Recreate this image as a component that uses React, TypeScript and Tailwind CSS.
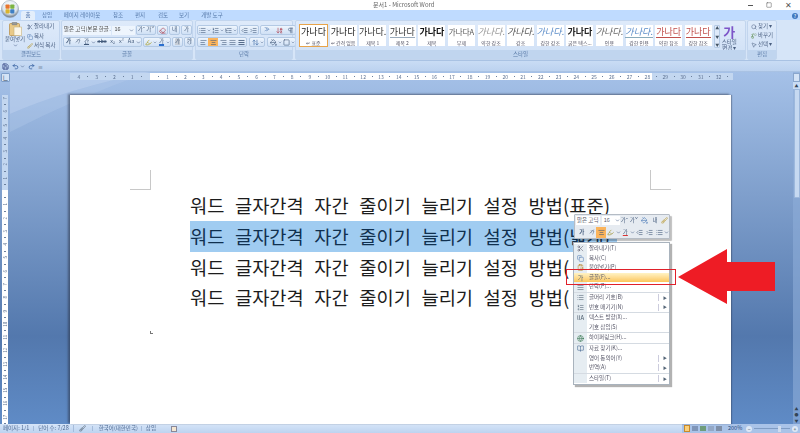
import type React from "react"
import {
  AlignCenter,
  AlignJustify,
  AlignLeft,
  AlignRight,
  ArrowDownAZ,
  ArrowUpDown,
  BookOpen,
  Brush,
  ChevronDown,
  ClipboardPaste,
  Copy,
  Eraser,
  Globe,
  Highlighter,
  IndentDecrease,
  IndentIncrease,
  List,
  ListOrdered,
  ListTree,
  MousePointer2,
  PaintBucket,
  Pilcrow,
  Redo2,
  Replace,
  Save,
  Scissors,
  Search,
  Square,
  Undo2,
} from "lucide-react"

const lines = ["방법(표준)", "방법(넓게)", "방법(", "방법("]

const styleTiles = [
  { text: "가나다", label: "↵ 표준", cls: "text-[#222]", active: true },
  { text: "가나다", label: "↵ 간격 없음", cls: "text-[#222]" },
  { text: "가나다.", label: "제목 1", cls: "text-[#333]" },
  { text: "가나다", label: "제목 2", cls: "text-[#333] border-b border-[#9ab]" },
  { text: "가나다", label: "제목", cls: "font-bold text-[#111]" },
  { text: "가나다A", label: "부제", cls: "text-[#555] !text-[7.5px]" },
  { text: "가나다.", label: "약한 강조", cls: "italic text-[#999]" },
  { text: "가나다.", label: "강조", cls: "italic text-[#555]" },
  { text: "가나다.", label: "강한 강조", cls: "italic text-[#5b8cc8]" },
  { text: "가나다", label: "굵은 텍스...", cls: "font-bold text-[#222]" },
  { text: "가나다.", label: "인용", cls: "italic text-[#666]" },
  { text: "가나다.", label: "강한 인용", cls: "italic text-[#5b8cc8] border-b border-[#8ab]" },
  { text: "가나다", label: "약한 참조", cls: "text-[#c0504d] border-b border-[#c0504d]" },
  { text: "가나다", label: "강한 참조", cls: "text-[#c0504d] border-b border-[#c0504d]" },
]

const tabs = [
  { name: "홈", w: "w-[14px]", active: true },
  { name: "삽입", w: "w-[24px]" },
  { name: "페이지 레이아웃", w: "w-[46px]" },
  { name: "참조", w: "w-[26px]" },
  { name: "편지", w: "w-[18px]" },
  { name: "검토", w: "w-[28px]" },
  { name: "보기", w: "w-[14px]" },
  { name: "개발 도구", w: "w-[42px]" },
]

const menuItems: { icon?: React.ReactNode; label: string; sub?: boolean; hot?: boolean; sep?: boolean }[] = [
  { icon: <Scissors size={7} className="text-[#667]" />, label: "잘라내기(T)" },
  { icon: <Copy size={7} className="text-[#5b83b8]" />, label: "복사(C)" },
  { icon: <ClipboardPaste size={7} className="text-[#b8862c]" />, label: "붙여넣기(P)" },
  { icon: <span className="text-[6px] text-[#567]">가</span>, label: "글꼴(F)...", hot: true },
  { icon: <AlignJustify size={7} className="text-[#567]" />, label: "단락(P)...", sep: true },
  { icon: <List size={7} className="text-[#567]" />, label: "글머리 기호(B)", sub: true },
  { icon: <ListOrdered size={7} className="text-[#567]" />, label: "번호 매기기(N)", sub: true, sep: true },
  { icon: <span className="text-[6px] text-[#456]">llA</span>, label: "텍스트 방향(X)..." },
  { label: "기호 삽입(S)", sep: true },
  { icon: <Globe size={7} className="text-[#3d7a57]" />, label: "하이퍼링크(H)...", sep: true },
  { icon: <BookOpen size={7} className="text-[#4a6a95]" />, label: "자료 찾기(K)..." },
  { label: "영어 동의어(Y)", sub: true },
  { label: "번역(A)", sub: true, sep: true },
  { label: "스타일(T)", sub: true },
]

function Caret() {
  return <ChevronDown size={5} strokeWidth={3} className="text-[#5a7196]" />
}

function Cluster({ children, className = "" }: { children: React.ReactNode; className?: string }) {
  return (
    <div
      className={`flex h-[10px] items-center rounded-[2px] border border-[#b3c9e4] bg-gradient-to-b from-[#eef5fd] to-[#cfe0f5] ${className}`}
    >
      {children}
    </div>
  )
}

function Cell({ children, hot = false, w = "w-[10px]" }: { children: React.ReactNode; hot?: boolean; w?: string }) {
  return (
    <div className={`flex h-full items-center justify-center text-[#41597a] ${w} ${hot ? "bg-[#fbb45c]" : ""}`}>
      {children}
    </div>
  )
}

function Group({ label, className, children }: { label: string; className: string; children: React.ReactNode }) {
  return (
    <div className={`flex h-full flex-none flex-col rounded-[2px] border border-[#c2d5ee] bg-gradient-to-b from-[#deeafa] to-[#cfe0f6] ${className}`}>
      <div className="min-h-0 flex-1">{children}</div>
      <div className="flex h-[9px] flex-none items-center justify-center bg-[#c0d5ef] text-[5.5px] leading-none text-[#5a7ba8]">
        {label}
      </div>
    </div>
  )
}

function Orb() {
  return (
    <svg width="18" height="18" viewBox="0 0 18 18">
      <defs>
        <radialGradient id="orb" cx="50%" cy="35%" r="60%">
          <stop offset="0" stopColor="#ffffff" />
          <stop offset="0.7" stopColor="#dde6ee" />
          <stop offset="1" stopColor="#7d8a99" />
        </radialGradient>
      </defs>
      <circle cx="9" cy="9" r="8.6" fill="url(#orb)" stroke="#8a96a6" strokeWidth="0.5" />
      <rect x="4.5" y="4.5" width="4.2" height="4.2" rx="0.8" fill="#e8752d" />
      <rect x="9.2" y="4.5" width="4.2" height="4.2" rx="0.8" fill="#7cb342" />
      <rect x="4.5" y="9.2" width="4.2" height="4.2" rx="0.8" fill="#d9b430" />
      <rect x="9.2" y="9.2" width="4.2" height="4.2" rx="0.8" fill="#3f7fc4" />
    </svg>
  )
}

function PasteIcon() {
  return (
    <svg width="13" height="14" viewBox="0 0 13 14">
      <rect x="0.5" y="1.5" width="10" height="12" rx="1" fill="#e9c987" stroke="#b48a42" strokeWidth="0.7" />
      <rect x="3" y="0.3" width="5" height="2.6" rx="0.6" fill="#9a9a96" stroke="#6f6f6c" strokeWidth="0.4" />
      <path d="M5 5H12.5V13.5H5Z" fill="#fbf6e8" stroke="#c7b27e" strokeWidth="0.6" />
    </svg>
  )
}

function HRuler() {
  const cells = Array.from({ length: 37 }, (_, i) => Math.abs(i - 4))
  return (
    <div className="flex h-[7px] w-[663px] items-center overflow-hidden bg-[linear-gradient(90deg,#c3d7f0_80px,#ffffff_80px,#ffffff_582px,#c3d7f0_582px)] pl-[4.4px] text-[5px] leading-none text-[#5d7190] blur-[0.3px]">
      {cells.map((n, i) => (
        <div key={i} className="flex flex-none items-center">
          <span className="w-[9px] flex-none text-center">{n === 0 ? "" : n}</span>
          <span className="flex w-[8.77px] flex-none justify-center">
            <span className="h-[1px] w-[1px] bg-[#6b7f9b]" />
          </span>
        </div>
      ))}
    </div>
  )
}

function VRuler() {
  const cells = [7, 6, 5, 4, 3, 2, 1, 0, 1, 2, 3, 4, 5, 6, 7, 8, 9, 10, 11, 12, 13, 14, 15, 16, 17]
  return (
    <div className="ml-[2px] flex h-[329px] w-[6px] flex-col items-center overflow-hidden bg-[linear-gradient(180deg,#c3d7f0_95px,#ffffff_95px)] text-[4.5px] leading-none text-[#5d7190] blur-[0.3px]">
      {cells.map((n, i) => (
        <div key={i} className="flex flex-none flex-col items-center">
          <span className="flex h-[6.65px] w-[6px] -rotate-90 items-center justify-center">{n === 0 ? "" : n}</span>
          <span className="flex h-[6.65px] items-center">
            <span className="h-[1px] w-[2px] bg-[#6b7f9b]" />
          </span>
        </div>
      ))}
    </div>
  )
}

function ContextMenu() {
  return (
    <div className="absolute left-[573px] top-[242px] flex w-[97px] flex-col border border-[#a9b3bd] bg-white py-[1px] text-[5.5px] leading-none text-[#556] shadow-[2px_2px_1px_rgba(0,0,0,0.3)]">
      {menuItems.map((item) => (
        <div key={item.label} className={item.sep ? "border-b border-[#d5dbe2]" : ""}>
          <div className={`flex h-[9.6px] items-center ${item.hot ? "bg-gradient-to-b from-[#fff3c4] to-[#fcc659]" : ""}`}>
            <div className={`flex h-full w-[13px] flex-none items-center justify-center blur-[0.25px] ${item.hot ? "" : "bg-[#e6edf2]"}`}>
              {item.icon}
            </div>
            <span className="ml-[2px] flex-1 blur-[0.25px]">{item.label}</span>
            {item.sub && (
              <span className="mr-[2px] flex h-[7px] w-[9px] items-center justify-end border-l border-[#ccd] text-[4px] text-[#567]">▶</span>
            )}
          </div>
        </div>
      ))}
    </div>
  )
}

function MiniToolbar() {
  return (
    <div className="absolute left-[574px] top-[214px] flex h-[25px] w-[96px] flex-col justify-center gap-[1px] rounded-[1px] border border-[#b5bcc5] bg-[#e6ebf1] pl-[1px] text-[5.5px] leading-none text-[#556] shadow-[2px_2px_1px_rgba(0,0,0,0.25)]">
      <div className="flex h-[11px] items-center blur-[0.25px]">
        <div className="flex h-[9px] w-[24px] items-center justify-between overflow-hidden whitespace-nowrap bg-white pl-[1px]">
          맑은 고딕 <Caret />
        </div>
        <div className="ml-[2px] flex h-[9px] w-[18px] items-center justify-between bg-white pl-[2px]">
          16 <Caret />
        </div>
        <Cell w="w-[10px]"><span>가ˆ</span></Cell>
        <Cell w="w-[9px]"><span>가ˇ</span></Cell>
        <Cell w="w-[12px]"><PaintBucket size={7} className="text-[#4a7ab8]" /></Cell>
        <Cell><span>내</span></Cell>
        <Cell w="w-[9px]"><Brush size={7} className="text-[#b8962c]" /></Cell>
      </div>
      <div className="flex h-[11px] items-center pl-[1px] blur-[0.25px]">
        <Cell><span className="font-bold">가</span></Cell>
        <Cell><span className="italic">가</span></Cell>
        <Cell hot><AlignCenter size={7} /></Cell>
        <Cell><Highlighter size={7} className="text-[#9a8a20]" /></Cell>
        <Cell w="w-[5px]"><Caret /></Cell>
        <Cell><span className="underline decoration-[#d33]">가</span></Cell>
        <Cell w="w-[5px]"><Caret /></Cell>
        <Cell><IndentDecrease size={7} /></Cell>
        <Cell><IndentIncrease size={7} /></Cell>
        <Cell><List size={7} /></Cell>
        <Cell w="w-[5px]"><Caret /></Cell>
      </div>
    </div>
  )
}

export default function App() {
  return (
    <div className="relative flex h-[433px] w-[800px] flex-col overflow-hidden bg-white font-['Noto_Sans_CJK_KR','Noto_Sans',sans-serif]">
      {/* Title bar */}
      <div className="flex h-[10px] flex-none items-center bg-white pl-[373px] text-[6px] leading-none text-[#666]">
        <span className="blur-[0.25px]">문서1 - Microsoft Word</span>
        <div className="ml-auto flex items-center gap-[13px] pr-[8px] text-[#555]">
          <span className="h-[1px] w-[5px] bg-[#555]" />
          <Square size={6} strokeWidth={2} />
          <span className="text-[8px]">✕</span>
        </div>
      </div>

      {/* Tabs */}
      <div className="flex h-[10px] flex-none items-end bg-[#bfdbff] pl-[21px] text-[5.5px] leading-none text-[#5578a8]">
        {tabs.map((t) => (
          <div
            key={t.name}
            className={`flex h-[9px] flex-none items-center justify-center rounded-t-[2px] ${t.w} ${t.active ? "bg-[#e3eefb] text-[#15428b]" : ""}`}
          >
            <span className="blur-[0.25px]">{t.name}</span>
          </div>
        ))}
        <div className="ml-auto mb-[1.5px] mr-[2px] flex h-[6px] w-[6px] items-center justify-center rounded-full bg-[#3f78c0] text-[5px] text-white">
          ?
        </div>
      </div>

      {/* Ribbon */}
      <div className="flex h-[40px] flex-none gap-[1px] bg-[#d6e5f8] pl-[2px] text-[5.5px] leading-none text-[#4a5f80] blur-[0.3px]">
        <Group label="클립보드" className="w-[58px]">
          <div className="flex h-full">
            <div className="flex w-[24px] flex-none flex-col items-center pt-[1px]">
              <PasteIcon />
              <span className="mt-[1px] whitespace-nowrap">붙여넣기</span>
              <Caret />
            </div>
            <div className="flex flex-col gap-[3.5px] pt-[3px]">
              <span className="flex items-center gap-[1px] whitespace-nowrap"><Scissors size={6} />잘라내기</span>
              <span className="flex items-center gap-[1px] whitespace-nowrap"><Copy size={6} className="text-[#5b83b8]" />복사</span>
              <span className="flex items-center gap-[1px] whitespace-nowrap"><Brush size={6} className="text-[#b8962c]" />서식 복사</span>
            </div>
          </div>
        </Group>

        <Group label="글꼴" className="w-[132px]">
          <div className="flex flex-col gap-[2px] pl-[1px] pt-[4px]">
            <div className="flex h-[10px] items-center">
              <div className="flex h-[9px] w-[52px] items-center justify-between overflow-hidden whitespace-nowrap bg-[#eef5fd] pl-[1px] text-[#444]">
                맑은 고딕(본문 한글 <Caret />
              </div>
              <div className="ml-[1px] flex h-[9px] w-[24px] items-center justify-between bg-[#eef5fd] pl-[2px] pr-[1px] text-[#444]">
                16 <Caret />
              </div>
              <Cluster className="ml-[1px]">
                <Cell w="w-[9px]"><span>가ˆ</span></Cell>
                <Cell w="w-[9px]">가ˇ</Cell>
              </Cluster>
              <Cluster className="ml-[1px]"><Cell w="w-[9px]"><Eraser size={7} className="text-[#a34]" /></Cell></Cluster>
              <Cluster className="ml-[1px]"><Cell w="w-[9px]"><span>내</span></Cell></Cluster>
              <Cluster className="ml-[1px]"><Cell w="w-[9px]"><span>가</span></Cell></Cluster>
            </div>
            <div className="flex h-[10px] items-center">
              <Cluster>
                <Cell w="w-[9px]"><span className="font-bold">가</span></Cell>
                <Cell w="w-[9px]"><span className="italic">가</span></Cell>
                <Cell w="w-[9px]"><span className="underline">간</span></Cell>
                <Cell w="w-[5px]"><Caret /></Cell>
                <Cell w="w-[12px]"><span className="line-through">abc</span></Cell>
                <Cell w="w-[9px]">x₂</Cell>
                <Cell w="w-[9px]">x²</Cell>
                <Cell>Aa</Cell>
                <Cell w="w-[5px]"><Caret /></Cell>
              </Cluster>
              <Cluster className="ml-[1px]">
                <Cell w="w-[9px]"><Highlighter size={7} className="text-[#a89a10]" /></Cell>
                <Cell w="w-[4px]"><Caret /></Cell>
                <Cell w="w-[9px]"><span className="underline decoration-[#2a6fd0] decoration-2">가</span></Cell>
                <Cell w="w-[4px]"><Caret /></Cell>
              </Cluster>
              <Cluster className="ml-[1px]"><Cell w="w-[9px]"><span className="bg-[#c8ced6]">가</span></Cell></Cluster>
              <Cluster className="ml-[1px]"><Cell w="w-[9px]"><span>㉮</span></Cell></Cluster>
            </div>
          </div>
        </Group>

        <Group label="단락" className="ml-[1px] w-[98px]">
          <div className="flex flex-col gap-[2px] pl-[1px] pt-[4px]">
            <div className="flex items-center">
              <Cluster>
                <Cell w="w-[9px]"><List size={7} /></Cell>
                <Cell w="w-[4px]"><Caret /></Cell>
                <Cell w="w-[9px]"><ListOrdered size={7} /></Cell>
                <Cell w="w-[4px]"><Caret /></Cell>
                <Cell w="w-[9px]"><ListTree size={7} /></Cell>
                <Cell w="w-[4px]"><Caret /></Cell>
              </Cluster>
              <Cluster className="ml-[1px]">
                <Cell w="w-[9px]"><IndentDecrease size={7} /></Cell>
                <Cell w="w-[9px]"><IndentIncrease size={7} /></Cell>
              </Cluster>
              <Cluster className="ml-[1px]">
                <Cell w="w-[12px]"><span className="text-[#3060a0]">≫</span></Cell>
                <Cell w="w-[12px]"><ArrowDownAZ size={7} className="text-[#a34]" /></Cell>
                <Cell w="w-[10px]"><Pilcrow size={7} /></Cell>
              </Cluster>
            </div>
            <div className="flex items-center">
              <Cluster>
                <Cell><AlignLeft size={7} /></Cell>
                <Cell hot><AlignCenter size={7} /></Cell>
                <Cell><AlignRight size={7} /></Cell>
                <Cell w="w-[9px]"><AlignJustify size={7} /></Cell>
                <Cell w="w-[9px]"><AlignJustify size={7} strokeWidth={3} /></Cell>
              </Cluster>
              <Cluster className="ml-[2px]">
                <Cell w="w-[10px]"><ArrowUpDown size={7} className="text-[#3060a0]" /></Cell>
                <Cell w="w-[4px]"><Caret /></Cell>
              </Cluster>
              <Cluster className="ml-[2px]">
                <Cell w="w-[10px]"><PaintBucket size={7} /></Cell>
                <Cell w="w-[4px]"><Caret /></Cell>
                <Cell w="w-[9px]"><Square size={7} /></Cell>
                <Cell w="w-[4px]"><Caret /></Cell>
              </Cluster>
            </div>
          </div>
        </Group>

        <Group label="스타일" className="ml-[1px] w-[451px]">
          <div className="flex h-full items-start pl-[4px] pt-[4px]">
            {styleTiles.map((s, i) => (
              <div
                key={i}
                className={`mr-[2.6px] flex h-[21px] w-[27px] flex-none flex-col items-center justify-between bg-white pb-[1px] pt-[1px] ${s.active ? "outline outline-1 outline-[#e8a44a]" : ""}`}
              >
                <span className={`whitespace-nowrap text-[9px] leading-[11px] ${s.cls}`}>{s.text}</span>
                <span className="whitespace-nowrap text-[5px] leading-none text-[#556]">{s.label}</span>
              </div>
            ))}
            <div className="flex h-[23px] w-[6px] flex-none flex-col items-center justify-between rounded-[1px] border border-[#b3c9e4] bg-[#dfeafa] text-[4px] leading-none text-[#456]">
              <span>▲</span>
              <span>▼</span>
              <span>▼</span>
            </div>
            <div className="flex w-[18px] flex-none flex-col items-center text-center leading-[6px]">
              <span className="text-[13px] font-bold leading-[13px] text-[#7d55c8]">가</span>
              <span className="mt-[1px] whitespace-nowrap">스타일</span>
              <span className="whitespace-nowrap">변경 ▾</span>
            </div>
          </div>
        </Group>

        <Group label="편집" className="w-[30px]">
          <div className="flex flex-col gap-[3px] pl-[3px] pt-[3px]">
            <span className="flex items-center gap-[1px] whitespace-nowrap"><Search size={6} />찾기 ▾</span>
            <span className="flex items-center gap-[1px] whitespace-nowrap"><Replace size={6} className="text-[#5a8a4a]" />바꾸기</span>
            <span className="flex items-center gap-[1px] whitespace-nowrap"><MousePointer2 size={6} />선택 ▾</span>
          </div>
        </Group>
      </div>

      {/* Quick access */}
      <div className="flex h-[12px] flex-none items-center gap-[3px] border-y border-[#a9c2e3] bg-gradient-to-b from-[#c9dcf4] to-[#bcd2ef] pl-[2px] text-[#2e5a9c]">
        <Save size={7} strokeWidth={2.5} className="text-[#2f3f80]" />
        <span className="flex items-center gap-[1px]">
          <Undo2 size={7} strokeWidth={2.5} />
          <Caret />
        </span>
        <Redo2 size={7} strokeWidth={2.5} />
        <span className="text-[5px] leading-none text-[#345]">≡</span>
      </div>

      {/* Workspace */}
      <div className="relative flex min-h-0 flex-1 bg-[linear-gradient(180deg,#a5c1e8_0%,#7f9fcc_35%,#5378ad_75%,#5f8bc6_100%)]">
        <svg className="absolute left-[10px] top-0 h-[60px] w-[140px]" viewBox="0 0 140 60">
          <path d="M0 0H140Q60 16 0 42Z" fill="#c2d6f0" fillOpacity="0.55" />
          <path d="M0 42Q60 16 140 0Q70 24 0 60Z" fill="#b5cbea" fillOpacity="0.35" />
        </svg>

        <div className="relative w-[70px] flex-none pt-[1px]">
          <div className="ml-[1px] flex h-[9px] w-[9px] items-center justify-center rounded-[1px] border border-[#7f9fc9] bg-[#d4e3f6] text-[6px] leading-none text-[#345]">
            ∟
          </div>
          <div className="mt-[13px]">
            <VRuler />
          </div>
        </div>

        <div className="relative w-[661px] flex-none pt-[1px]">
          <HRuler />
          <div className="mt-[15px] h-[329px] w-[661px] bg-white pt-[75px] shadow-[-2px_-1px_2px_rgba(40,50,70,0.55),1px_0_1px_rgba(40,50,70,0.35)]">
            <div className="mx-[60px] flex justify-between">
              <div className="h-[20px] w-[21px] border-b border-r border-[#c8c8c8]" />
              <div className="h-[20px] w-[21px] border-b border-l border-[#c8c8c8]" />
            </div>
            <div className="pl-[120px] text-[18.7px] leading-[30.8px] text-[#1c1c1c] [word-spacing:6.4px]">
              {lines.map((l, i) => (
                <div key={i} className={i === 1 ? "w-[427px] bg-[#a0ccf1] text-[#10304f]" : ""}>
                  <span className="whitespace-nowrap">워드 글자간격 자간 줄이기 늘리기 설정 {l}</span>
                </div>
              ))}
            </div>
            <div className="ml-[80px] mt-[18px] h-[3px] w-[3px] border-b border-l border-[#777]" />
          </div>
        </div>

        <div className="flex-1" />

        <div className="flex w-[7px] flex-none flex-col items-center bg-[#8eadd8]/60 pt-[1px] text-[4px] leading-none text-[#345]">
          <div className="h-[9px] w-[7px] border border-[#8aa6cc] bg-[#d4e3f6]" />
          <div className="flex h-[7px] w-[7px] items-center justify-center bg-[#c9dcf4]">▲</div>
          <div className="h-[109px] w-[6px] rounded-[1px] border border-[#9db8dc] bg-[#c6d9f1]" />
          <div className="flex-1" />
          <div className="flex h-[6px] items-center">▲</div>
          <div className="flex h-[6px] items-center">●</div>
          <div className="flex h-[6px] items-center">▼</div>
        </div>
      </div>

      {/* Status bar */}
      <div className="flex h-[9px] flex-none items-center bg-gradient-to-b from-[#d6e5f8] to-[#bdd3f0] pl-[3px] text-[5.5px] leading-none text-[#4a6690]">
        <span className="blur-[0.25px]">페이지: 1/1</span>
        <span className="ml-[4px] border-l border-[#a5bcdb] pl-[4px] blur-[0.25px]">단어 수: 7/28</span>
        <span className="ml-[4px] flex items-center border-l border-[#a5bcdb] pl-[5px]"><Brush size={7} className="text-[#567]" /></span>
        <span className="ml-[6px] border-l border-[#a5bcdb] pl-[6px] blur-[0.25px]">한국어(대한민국)</span>
        <span className="ml-[3px] border-l border-[#a5bcdb] pl-[4px] blur-[0.25px]">삽입</span>
        <span className="ml-[15px] h-[6px] w-[6px] border border-[#889] bg-[#f4e6d2]" />
        <div className="ml-auto flex h-full w-[118px] items-center bg-[#a9c3e8] pl-[2px]">
          <span className="h-[7px] w-[6px] border border-[#c88a2c] bg-[#fbd07a]" />
          <span className="ml-[2px] h-[5px] w-[6px] bg-[#7f95b8]" />
          <span className="ml-[2px] h-[5px] w-[6px] bg-[#6f9c7a]" />
          <span className="ml-[2px] h-[5px] w-[6px] bg-[#94a8c6]" />
          <span className="ml-[2px] h-[5px] w-[6px] bg-[#7f8fa8]" />
          <span className="ml-[6px] text-[#24497d]">200%</span>
          <span className="ml-[4px] flex h-[6px] w-[6px] items-center justify-center rounded-full bg-[#dde8f6] text-[5px] text-[#345]">−</span>
          <span className="relative mx-[2px] h-[1px] flex-1 bg-[#7f9cc4]">
            <span className="absolute left-[24px] top-[-2.5px] h-[6px] w-[3px] bg-[#cfdcee]" />
          </span>
          <span className="mr-[2px] flex h-[6px] w-[6px] items-center justify-center rounded-full bg-[#dde8f6] text-[5px] text-[#345]">+</span>
        </div>
      </div>

      {/* Overlays: office button, mini toolbar, menu, annotation */}
      <div className="absolute left-[1px] top-0">
        <Orb />
      </div>
      <MiniToolbar />
      <ContextMenu />
      <div className="absolute left-[566px] top-[269px] h-[16px] w-[110px] border border-[#e0202a]" />
      <svg className="absolute left-[678px] top-[249px] h-[55px] w-[97px]" viewBox="0 0 97 55">
        <path d="M0 28 L49 0 V13 H97 V42 H49 V55 Z" fill="#ee1c25" />
      </svg>
    </div>
  )
}
